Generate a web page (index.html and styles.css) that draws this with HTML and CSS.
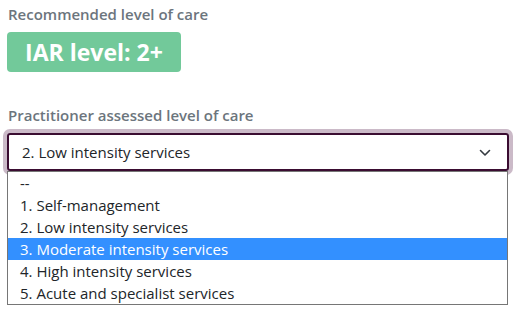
FILE: index.html
```html
<!DOCTYPE html>
<html>
<head>
<meta charset="utf-8">
<link rel="stylesheet" href="styles.css">
</head>
<body>
<div class="page">
  <div class="label">Recommended level of care</div>
  <div class="badge">IAR level: 2+</div>
  <div class="label label-second">Practitioner assessed level of care</div>
  <div class="field">
    <div class="select">
      <span class="value">2. Low intensity services</span>
      <svg class="chevron" width="12" height="8" viewBox="0 0 12 8"><path d="M1.5 1.5 L6 6 L10.5 1.5" fill="none" stroke="#343a40" stroke-width="1.6" stroke-linecap="round" stroke-linejoin="round"/></svg>
    </div>
    <ul class="options">
      <li>--</li>
      <li>1. Self-management</li>
      <li>2. Low intensity services</li>
      <li class="active">3. Moderate intensity services</li>
      <li>4. High intensity services</li>
      <li>5. Acute and specialist services</li>
    </ul>
  </div>
</div>
</body>
</html>
```
FILE: styles.css
```css
html, body {
  margin: 0;
  padding: 0;
  background: #ffffff;
}
body {
  font-family: "Open Sans", "Noto Sans", sans-serif;
  color: #212529;
}
.page {
  padding: 4px 0 6px 7px;
  width: 502px;
}
.label {
  font-size: 15px;
  font-weight: 600;
  color: #6c757d;
  line-height: 20px;
  padding-left: 1px;
}
.label-second {
  margin-top: 33px;
}
.badge {
  display: inline-flex;
  align-items: center;
  justify-content: center;
  margin-top: 8px;
  width: 174px;
  height: 40px;
  box-sizing: border-box;
  background: #72c99a;
  color: #ffffff;
  font-size: 23px;
  font-weight: 700;
  border-radius: 4px;
  padding-bottom: 1px;
}
.field {
  margin-top: 8px;
}
.select {
  display: flex;
  align-items: center;
  justify-content: space-between;
  height: 38px;
  box-sizing: border-box;
  border: 2px solid #3a0c31;
  border-radius: 3px;
  box-shadow: 0 0 0 4px #cbbac8;
  padding: 0 16px 0 13px;
  font-size: 15px;
  color: #212529;
}
.chevron {
  display: block;
  margin-top: 1px;
}
.options {
  position: relative;
  z-index: 1;
  width: 501px;
  margin: 0;
  padding: 0;
  list-style: none;
  background: #ffffff;
  border: 1px solid #767676;
  box-sizing: border-box;
  font-size: 15px;
  color: #212529;
}
.options li {
  height: 22px;
  line-height: 22px;
  padding-left: 12px;
}
.options li.active {
  background: #3390ff;
  color: #ffffff;
}
```
